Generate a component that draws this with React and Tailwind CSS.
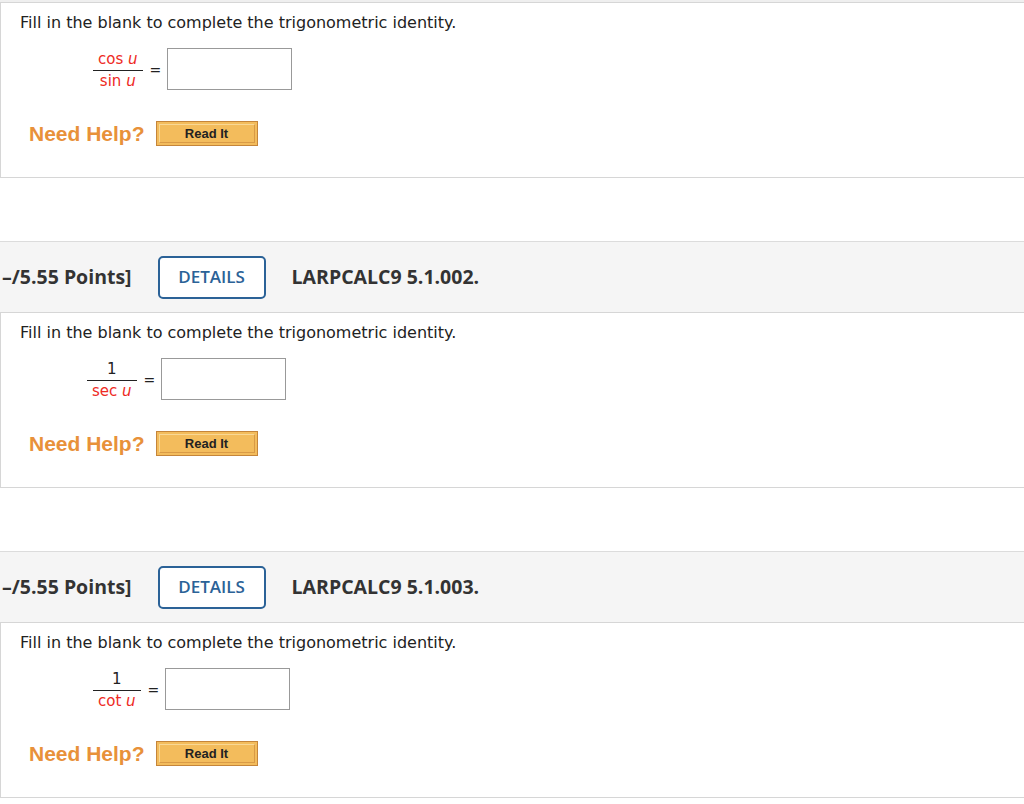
import React from "react";

const questions = [
  { id: "5.1.002.", num: "1", numRed: false, den: "sec", lineMl: "ml-[86px]" },
  { id: "5.1.003.", num: "1", numRed: false, den: "cot", lineMl: "ml-[92px]" },
];

function Fraction({ num, numRed, den }) {
  return (
    <div className="flex flex-col items-center text-[15px] leading-[19px] mt-[3px]">
      <div className={numRed ? "text-[#ee2a24] px-[5px]" : "text-[#222] px-[5px]"}>
        {numRed ? (
          <>
            cos <i>u</i>
          </>
        ) : (
          num
        )}
      </div>
      <div className="w-full border-t border-[#222] my-[1px]" />
      <div className="text-[#ee2a24] px-[5px]">
        {den} <i>u</i>
      </div>
    </div>
  );
}

function QuestionBox({ num, numRed, den, lineMl }) {
  return (
    <div className="border-l border-b border-[#d6d6d6] bg-white h-[175px] pt-[10px]">
      <p className="pl-[19px] text-[16px] leading-[20px] text-[#222]">
        Fill in the blank to complete the trigonometric identity.
      </p>
      <div className={"flex items-center mt-[14px] " + lineMl}>
        <Fraction num={num} numRed={numRed} den={den} />
        <span className="ml-[7px] mt-[2px] text-[14px] text-[#222]">=</span>
        <div className="ml-[6px] w-[125px] h-[42px] border border-[#999] bg-white" />
      </div>
      <div className="flex items-center mt-[27px] pl-[28px]">
        <span
          className="text-[21px] font-bold text-[#e8913a]"
          style={{ fontFamily: '"Liberation Sans", Arial, sans-serif' }}
        >
          Need Help?
        </span>
        <button
          className="ml-[11px] w-[102px] h-[25px] border border-[#c5853a] bg-[#f3bc5c] p-[2px]"
          style={{ fontFamily: '"Liberation Sans", Arial, sans-serif' }}
        >
          <div className="h-full border border-[#f9d894] border-b-[#d99a46] border-r-[#d99a46] flex items-center justify-center text-[13px] font-bold text-[#222]">
            Read It
          </div>
        </button>
      </div>
    </div>
  );
}

function Header({ id }) {
  return (
    <div
      className="border-t border-[#dcdcdc] bg-[#f5f5f5] h-[71px] flex items-center"
      style={{ fontFamily: '"Open Sans", sans-serif' }}
    >
      <span className="pl-[2px] text-[19.5px] font-bold text-[#333]">–/5.55 Points]</span>
      <div className="ml-[26px] w-[108px] h-[43px] rounded-[5px] border-2 border-[#2b6297] bg-white flex items-center justify-center text-[17px] font-semibold text-[#2b6297]">
        DETAILS
      </div>
      <span className="ml-[26px] text-[19.5px] font-bold text-[#333]">LARPCALC9 {id}</span>
    </div>
  );
}

export default function App() {
  return (
    <div
      className="w-[1024px] h-[804px] bg-white overflow-hidden"
      style={{ fontFamily: 'Verdana, "DejaVu Sans", sans-serif' }}
    >
      <div className="h-[2px] bg-[#efefef]" />
      <div className="border-t border-[#d6d6d6]">
        <QuestionBox numRed den="sin" lineMl="ml-[92px]" />
      </div>
      {questions.map((q) => (
        <div key={q.id} className="mt-[63px]">
          <Header id={q.id} />
          <div className="border-t border-[#d6d6d6]">
            <QuestionBox {...q} />
          </div>
        </div>
      ))}
    </div>
  );
}
